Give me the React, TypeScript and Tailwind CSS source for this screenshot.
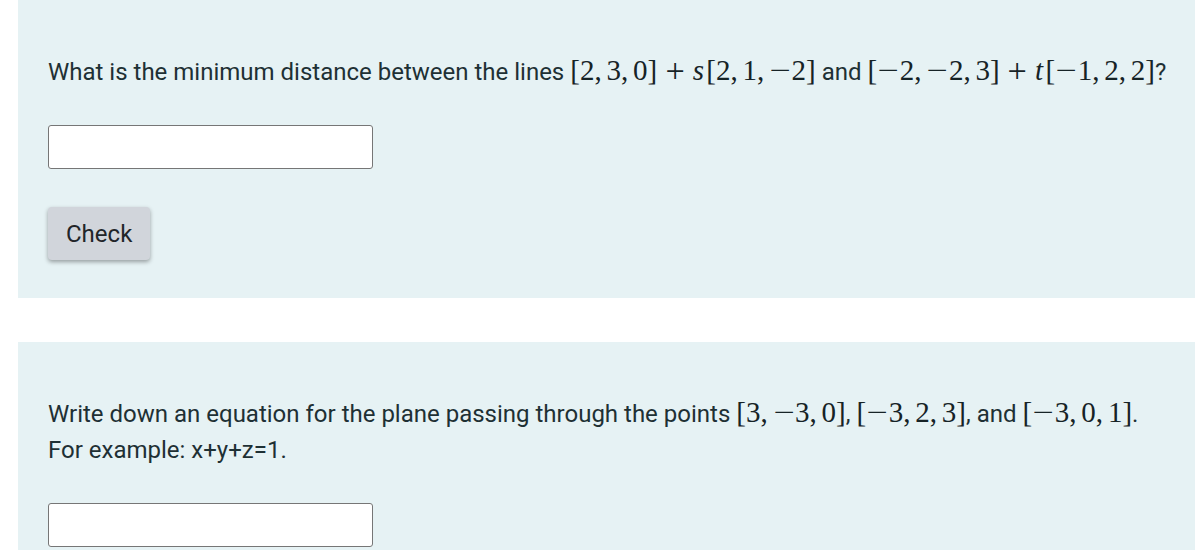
import React from "react";

// tiny hand-rolled renderer for the bracketed vectors, spaced the way KaTeX does it
function MathInline({ tex }: { tex: string }) {
  const parts: React.ReactNode[] = [];
  tex.split("").forEach((c, i) => {
    if (c === ",") {
      parts.push(
        <span key={i} className="mr-[0.1667em]">
          ,
        </span>
      );
    } else if (c === "+") {
      parts.push(
        <span key={i} className="inline-block w-[0.7778em] mx-[0.2222em] text-center">
          <span className="inline-block scale-[1.18]">+</span>
        </span>
      );
    } else if (c === "-") {
      parts.push(
        <span key={i} className="inline-block w-[0.7778em] text-center">
          <span className="inline-block scale-x-[1.3]">−</span>
        </span>
      );
    } else if (/[a-z]/.test(c)) {
      parts.push(
        <span key={i} className="italic mr-[0.08em]">
          {c}
        </span>
      );
    } else {
      parts.push(<span key={i}>{c}</span>);
    }
  });
  return (
    <span className="font-['Liberation_Serif',serif] text-[29px] leading-none whitespace-nowrap text-[#162326]">
      {parts}
    </span>
  );
}

function AnswerBox() {
  return (
    <input
      type="text"
      className="block w-[325px] h-[44px] bg-white border border-[#767676] rounded-[3px] outline-none px-2"
    />
  );
}

function CheckButton() {
  return (
    <button className="mt-[38px] h-[53px] px-[18px] bg-[#d1d5db] rounded-[4px] text-[24px] text-[#212529] shadow-[0_2px_4px_rgba(0,0,0,0.35)]">
      Check
    </button>
  );
}

function Question({ children, showCheck = true }: { children: React.ReactNode; showCheck?: boolean }) {
  return (
    <section className="bg-[#e6f2f4] pl-[30px] pt-[54px] pb-[38px]">
      <p className="text-[24px] leading-[36px] text-[#1e3034]">{children}</p>
      <div className="mt-[35px]">
        <AnswerBox />
      </div>
      {showCheck && <CheckButton />}
    </section>
  );
}

export default function App() {
  return (
    <div className="min-h-screen bg-white pl-[18px] font-['Roboto','Liberation_Sans',sans-serif]">
      <div className="flex flex-col gap-[44px]">
        <Question>
          What is the minimum distance between the lines <MathInline tex="[2,3,0]+s[2,1,-2]" /> and{" "}
          <MathInline tex="[-2,-2,3]+t[-1,2,2]" />?
        </Question>
        <Question showCheck={false}>
          Write down an equation for the plane passing through the points <MathInline tex="[3,-3,0]" />,{" "}
          <MathInline tex="[-3,2,3]" />, and <MathInline tex="[-3,0,1]" />.
          <br />
          For example: x+y+z=1.
        </Question>
      </div>
    </div>
  );
}
